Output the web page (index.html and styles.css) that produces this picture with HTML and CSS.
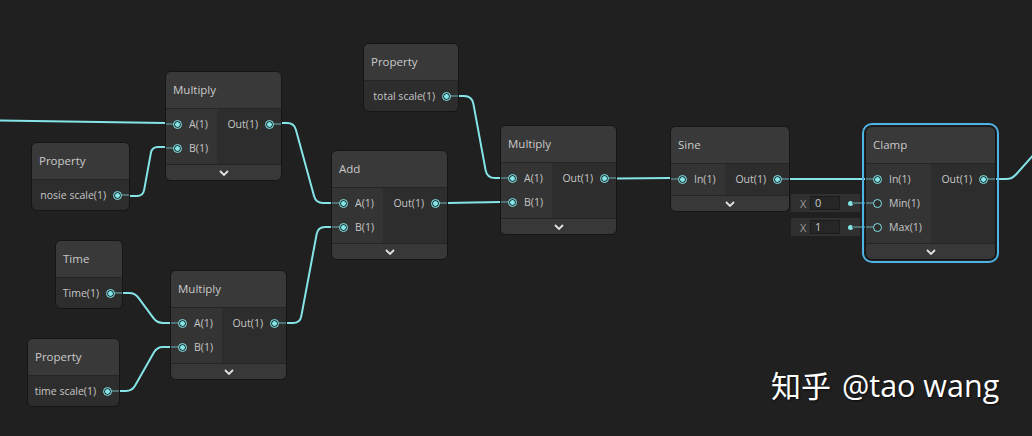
FILE: index.html
```html
<!DOCTYPE html>
<html lang="zh">
<head>
    <meta charset="UTF-8">
    <meta name="viewport" content="width=device-width, initial-scale=1.0">
    <title>Shader Graph</title>
    <link rel="stylesheet" href="styles.css">
</head>
<body>
    <div class="graph">
        <svg class="wires" width="1032" height="436" viewBox="0 0 1032 436">
            <path d="M-5 120.5 L165 123"/>
            <path d="M130 196 H137 Q143 196 144.1 190.1 L150.9 152.9 Q152 147 158 147 H165"/>
            <path d="M282 123 H287 Q294 123 295.9 129.7 L314.1 196.3 Q316 203 323 203 H331"/>
            <path d="M123 293 H129 Q135 293 138.5 297.8 L153.5 318.2 Q157 323 163 323 H170"/>
            <path d="M120 391 H126 Q132 391 135 385.8 L154 352.2 Q157 347 163 347 H170"/>
            <path d="M287 323 H293 Q300 323 301.3 316.1 L316.7 233.9 Q318 227 325 227 H331"/>
            <path d="M448 203 C470 203 476 202 500 202"/>
            <path d="M459 96 H464 Q472 96 473.4 103.9 L485.6 170.1 Q487 178 495 178 H500"/>
            <path d="M617 178.5 L670 178"/>
            <path d="M790 179 H865"/>
            <path d="M996 179 H1006 Q1012 179 1016 174.5 L1036 152"/>
        </svg>

        <!-- left column -->
        <div class="node prop n-nosie">
            <div class="title">Property</div>
            <div class="outputs">
                <div class="port out on"><span>nosie scale(1)</span><i class="dot"></i></div>
            </div>
        </div>

        <div class="node prop n-time">
            <div class="title">Time</div>
            <div class="outputs">
                <div class="port out on"><span>Time(1)</span><i class="dot"></i></div>
            </div>
        </div>

        <div class="node prop n-tscale">
            <div class="title">Property</div>
            <div class="outputs">
                <div class="port out on"><span>time scale(1)</span><i class="dot"></i></div>
            </div>
        </div>

        <div class="node n-mul1">
            <div class="title">Multiply</div>
            <div class="body">
                <div class="inputs">
                    <div class="port in on"><i class="dot"></i><span>A(1)</span></div>
                    <div class="port in on"><i class="dot"></i><span>B(1)</span></div>
                </div>
                <div class="outputs">
                    <div class="port out on"><span>Out(1)</span><i class="dot"></i></div>
                </div>
            </div>
            <div class="foot"><svg width="10" height="6" viewBox="0 0 10 6"><path d="M1 1 L5 5 L9 1"/></svg></div>
        </div>

        <div class="node n-mul2">
            <div class="title">Multiply</div>
            <div class="body">
                <div class="inputs">
                    <div class="port in on"><i class="dot"></i><span>A(1)</span></div>
                    <div class="port in on"><i class="dot"></i><span>B(1)</span></div>
                </div>
                <div class="outputs">
                    <div class="port out on"><span>Out(1)</span><i class="dot"></i></div>
                </div>
            </div>
            <div class="foot"><svg width="10" height="6" viewBox="0 0 10 6"><path d="M1 1 L5 5 L9 1"/></svg></div>
        </div>

        <!-- middle -->
        <div class="node prop n-total">
            <div class="title">Property</div>
            <div class="outputs">
                <div class="port out on"><span>total scale(1)</span><i class="dot"></i></div>
            </div>
        </div>

        <div class="node n-add">
            <div class="title">Add</div>
            <div class="body">
                <div class="inputs">
                    <div class="port in on"><i class="dot"></i><span>A(1)</span></div>
                    <div class="port in on"><i class="dot"></i><span>B(1)</span></div>
                </div>
                <div class="outputs">
                    <div class="port out on"><span>Out(1)</span><i class="dot"></i></div>
                </div>
            </div>
            <div class="foot"><svg width="10" height="6" viewBox="0 0 10 6"><path d="M1 1 L5 5 L9 1"/></svg></div>
        </div>

        <div class="node n-mul3">
            <div class="title">Multiply</div>
            <div class="body">
                <div class="inputs">
                    <div class="port in on"><i class="dot"></i><span>A(1)</span></div>
                    <div class="port in on"><i class="dot"></i><span>B(1)</span></div>
                </div>
                <div class="outputs">
                    <div class="port out on"><span>Out(1)</span><i class="dot"></i></div>
                </div>
            </div>
            <div class="foot"><svg width="10" height="6" viewBox="0 0 10 6"><path d="M1 1 L5 5 L9 1"/></svg></div>
        </div>

        <!-- right -->
        <div class="node n-sine">
            <div class="title">Sine</div>
            <div class="body">
                <div class="inputs">
                    <div class="port in on"><i class="dot"></i><span>In(1)</span></div>
                </div>
                <div class="outputs">
                    <div class="port out on"><span>Out(1)</span><i class="dot"></i></div>
                </div>
            </div>
            <div class="foot"><svg width="10" height="6" viewBox="0 0 10 6"><path d="M1 1 L5 5 L9 1"/></svg></div>
        </div>

        <div class="field f-min"><span class="axis">X</span><span class="box">0</span><i class="pin"></i></div>
        <div class="field f-max"><span class="axis">X</span><span class="box">1</span><i class="pin"></i></div>

        <div class="node selected n-clamp">
            <div class="title">Clamp</div>
            <div class="body">
                <div class="inputs">
                    <div class="port in on"><i class="dot"></i><span>In(1)</span></div>
                    <div class="port in on"><i class="dot empty"></i><span>Min(1)</span></div>
                    <div class="port in on"><i class="dot empty"></i><span>Max(1)</span></div>
                </div>
                <div class="outputs">
                    <div class="port out on"><span>Out(1)</span><i class="dot"></i></div>
                </div>
            </div>
            <div class="foot"><svg width="10" height="6" viewBox="0 0 10 6"><path d="M1 1 L5 5 L9 1"/></svg></div>
        </div>

        <div class="mark"><span class="zh">知乎</span> @tao wang</div>
    </div>
</body>
</html>
```

FILE: styles.css
```css
body, html {
    margin: 0;
    padding: 0;
    background: #202020;
    overflow: hidden;
}
.graph {
    position: relative;
    width: 1032px;
    height: 436px;
    overflow: hidden;
    background: #202020;
    font-family: 'Open Sans', 'Noto Sans', sans-serif;
}
.wires {
    position: absolute;
    left: 0;
    top: 0;
}
.wires path {
    fill: none;
    stroke: #84e4e7;
    stroke-width: 2;
}

/* nodes */
.node {
    position: absolute;
    box-sizing: border-box;
    background: #2d2d2d;
    border: 1px solid #151515;
    border-radius: 6px;
    overflow: hidden;
    color: #c6c6c6;
}
.title {
    height: 36px;
    line-height: 36px;
    padding-left: 7px;
    font-size: 11.5px;
    color: #c9c9c9;
    background: #393939;
    border-bottom: 1px solid #252525;
    white-space: nowrap;
}
.body {
    display: flex;
}
.inputs {
    background: #343434;
    padding: 3px 0 4px;
    flex: none;
}
.body .outputs {
    flex: 1;
    padding: 3px 0 4px;
}
.prop .outputs {
    padding: 3px 0 3px;
}
.port {
    position: relative;
    height: 24px;
    display: flex;
    align-items: center;
    gap: 7px;
    font-size: 10.5px;
    white-space: nowrap;
}
.port.in {
    padding-left: 7px;
}
.port.out {
    justify-content: flex-end;
    padding-right: 7px;
}
.port.on::before {
    content: '';
    position: absolute;
    top: 11px;
    width: 8px;
    height: 2px;
    background: #4d7172;
}
.port.in.on::before { left: 0; }
.port.out.on::before { right: 0; }
.dot {
    position: relative;
    flex: none;
    width: 9px;
    height: 9px;
    box-sizing: border-box;
    border: 1.5px solid #84e4e7;
    border-radius: 50%;
    background: radial-gradient(circle, #84e4e7 0 2px, #223a3b 2.6px);
}
.dot.empty {
    background: #2c2c2c;
}
.foot {
    height: 15px;
    background: #383838;
    border-top: 1px solid #242424;
    display: flex;
    justify-content: center;
    align-items: center;
}
.foot svg path {
    fill: none;
    stroke: #e2e2e2;
    stroke-width: 1.8;
}
.node.selected {
    outline: 2px solid #4fb3e6;
    outline-offset: 1px;
    border-radius: 7px;
}

/* node places on the canvas */
.n-nosie  { left: 31px;  top: 142px; width: 99px; }
.n-time   { left: 55px;  top: 240px; width: 68px; }
.n-tscale { left: 27px;  top: 338px; width: 93px; }
.n-mul1   { left: 165px; top: 71px;  width: 117px; }
.n-mul2   { left: 170px; top: 270px; width: 117px; }
.n-total  { left: 363px; top: 43px;  width: 96px; }
.n-add    { left: 331px; top: 150px; width: 117px; }
.n-mul3   { left: 500px; top: 125px; width: 117px; }
.n-sine   { left: 670px; top: 126px; width: 120px; }
.n-clamp  { left: 865px; top: 126px; width: 131px; }
.n-mul1 .inputs, .n-mul2 .inputs, .n-add .inputs, .n-mul3 .inputs { width: 51px; }
.n-sine .inputs  { width: 54px; }
.n-clamp .inputs { width: 65px; }

/* inline default values */
.field {
    position: absolute;
    left: 791px;
    width: 69px;
    height: 18px;
    box-sizing: border-box;
    display: flex;
    align-items: center;
    padding-left: 9px;
    background: #303030;
    font-size: 11px;
}
.f-min { top: 194px; }
.f-max { top: 218px; }
.axis {
    color: #9a9a9a;
    width: 9px;
}
.box {
    margin-left: 1px;
    width: 30px;
    height: 14px;
    box-sizing: border-box;
    line-height: 12px;
    padding-left: 4px;
    background: #262626;
    border: 1px solid #1c1c1c;
    color: #c8c8c8;
}
.pin {
    margin-left: 8px;
    width: 5px;
    height: 5px;
    border-radius: 50%;
    background: #84e4e7;
}
.field::after {
    content: '';
    position: absolute;
    left: 61px;
    right: -5px;
    top: 8px;
    height: 2px;
    background: #4d7172;
}

.mark {
    position: absolute;
    left: 771px;
    top: 364px;
    font-size: 30.5px;
    line-height: 40px;
    color: #ffffff;
    white-space: nowrap;
    font-family: 'Open Sans', 'Noto Sans CJK SC', sans-serif;
    text-shadow: 1px 1px 2px rgba(0, 0, 0, 0.7);
}
.zh {
    font-family: 'Noto Sans CJK SC', sans-serif;
    font-size: 30px;
    margin-right: 3px;
}
```
